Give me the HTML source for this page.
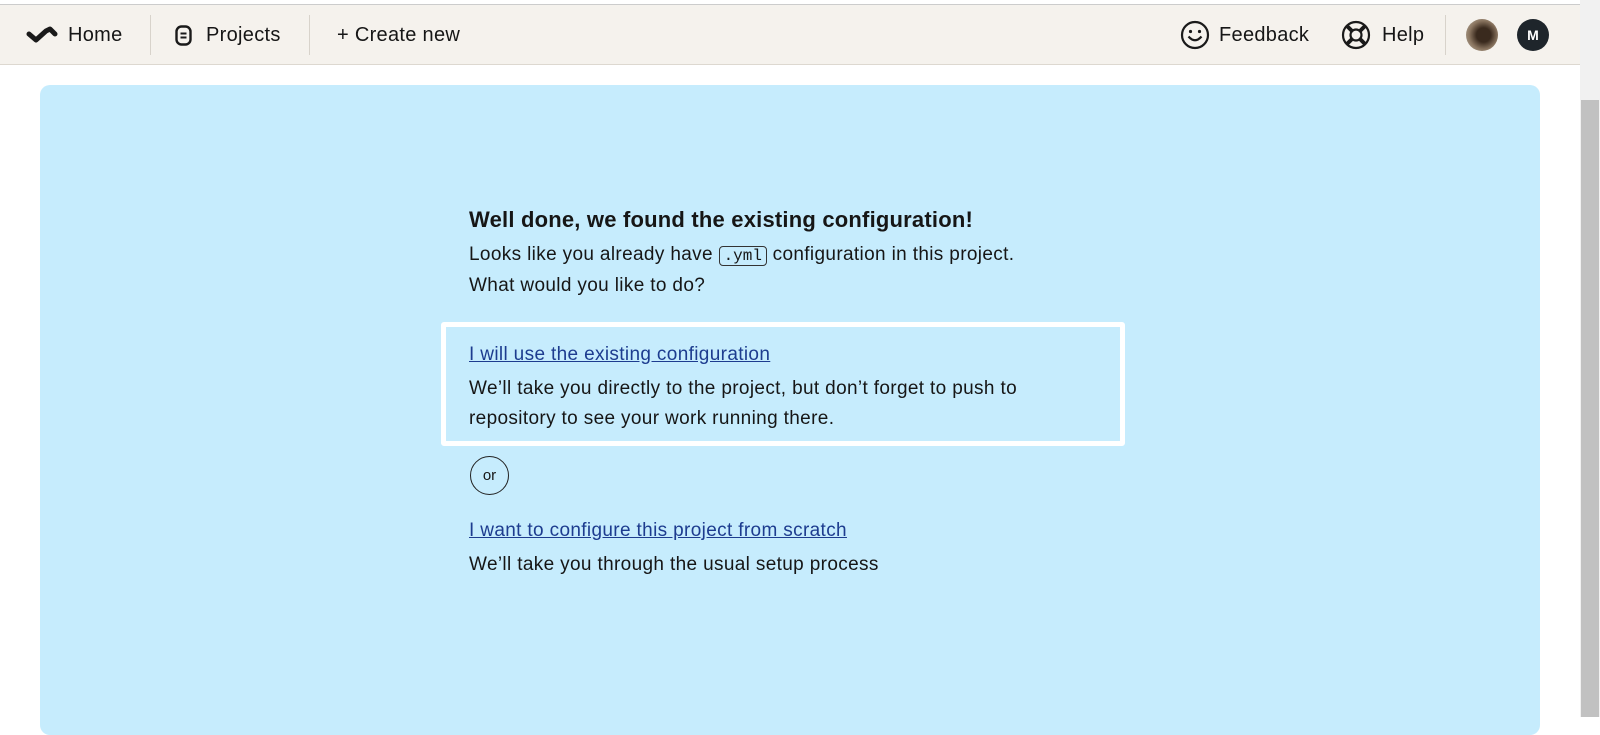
<!DOCTYPE html>
<html><head><meta charset="utf-8"><style>
*{margin:0;padding:0;box-sizing:border-box}
body{width:1600px;height:717px;overflow:hidden;background:#fff;font-family:"Liberation Sans",sans-serif;color:#161616;position:relative}
.top{position:absolute;left:0;top:0;width:1580px;height:5px;background:#fff;border-bottom:1px solid #ccc}
.hdr{position:absolute;left:0;top:5px;width:1580px;height:60px;background:#f5f2ed;border-bottom:1px solid #ddd8d0}
.hdr .t{position:absolute;top:0;line-height:60px;font-size:20px;letter-spacing:0.3px;color:#161616}
.div{position:absolute;top:10px;width:1px;height:40px;background:#d8d3cb}
.sb{position:absolute;left:1580px;top:0;width:20px;height:717px;background:#f1f1f1}
.sb .th{position:absolute;left:1px;top:100px;width:18px;height:617px;background:#c1c1c1}
.panel{position:absolute;left:40px;top:85px;width:1500px;height:650px;background:#c6ecfd;border-radius:10px}
.c{position:absolute;left:469px;font-size:19px;letter-spacing:0.35px;color:#161616}
a{color:#1d3c8f;text-decoration:underline}
code{font-family:"Liberation Mono",monospace;font-size:16px;border:1px solid #333;border-radius:4px;padding:0 4px;letter-spacing:0}
.box{position:absolute;left:441px;top:322px;width:684px;height:124px;border:5px solid #fff;border-radius:3px}
.or{position:absolute;left:470px;top:456px;width:39px;height:39px;border:1px solid #222;border-radius:50%;text-align:center;line-height:37px;font-size:15px}
</style></head><body>
<div class="top"></div>
<div class="hdr">
<svg style="position:absolute;left:25px;top:17px" width="33" height="26" viewBox="0 0 33 26"><path d="M4 12 L11 18 L21 9 L25 7 L30 12" fill="none" stroke="#1a1a1a" stroke-width="5" stroke-linejoin="round" stroke-linecap="round"/></svg>
<div class="t" style="left:68px">Home</div>
<div class="div" style="left:150px"></div>
<svg style="position:absolute;left:175px;top:20px" width="17" height="21" viewBox="0 0 17 21"><rect x="1.5" y="1.5" width="14" height="18" rx="5" fill="none" stroke="#1a1a1a" stroke-width="2.4"/><path d="M5.5 8.5h6M5.5 12.5h6" stroke="#1a1a1a" stroke-width="2"/></svg>
<div class="t" style="left:206px">Projects</div>
<div class="div" style="left:309px"></div>
<div class="t" style="left:337px">+ Create new</div>
<svg style="position:absolute;left:1180px;top:15px" width="30" height="30" viewBox="0 0 30 30"><circle cx="15" cy="15" r="13" fill="none" stroke="#1a1a1a" stroke-width="2.2"/><circle cx="10.5" cy="11.5" r="1.6" fill="#1a1a1a"/><circle cx="19.5" cy="11.5" r="1.6" fill="#1a1a1a"/><path d="M8.5 16.5 Q15 24 21.5 16.5" fill="none" stroke="#1a1a1a" stroke-width="2.2"/></svg>
<div class="t" style="left:1219px">Feedback</div>
<svg style="position:absolute;left:1341px;top:15px" width="30" height="30" viewBox="0 0 30 30"><circle cx="15" cy="15" r="13" fill="none" stroke="#1a1a1a" stroke-width="2.2"/><circle cx="15" cy="15" r="5.5" fill="none" stroke="#1a1a1a" stroke-width="2.2"/><path d="M11 11L6 6M19 11L24 6M11 19L6 24M19 19L24 24" stroke="#1a1a1a" stroke-width="4"/></svg>
<div class="t" style="left:1382px">Help</div>
<div class="div" style="left:1445px"></div>
<div style="position:absolute;left:1466px;top:14px;width:32px;height:32px;border-radius:50%;background:radial-gradient(circle at 55% 50%,#3a2a1e 30%,#8a7560 60%,#c0b8a8)"></div>
<div style="position:absolute;left:1517px;top:14px;width:32px;height:32px;border-radius:50%;background:#1e252b;color:#fff;font-weight:bold;font-size:14px;text-align:center;line-height:32px">M</div>
</div>
<div class="sb"><div class="th"></div></div>
<div class="panel"></div>
<div class="c" style="top:207px;font-size:22px;font-weight:bold;letter-spacing:0.2px">Well done, we found the existing configuration!</div>
<div class="c" style="top:240px;line-height:29px">Looks like you already have <code>.yml</code> configuration in this project.<br>What would you like to do?</div>
<div class="box"></div>
<div class="c" style="top:344px"><a>I will use the existing configuration</a></div>
<div class="c" style="top:374px;line-height:30px">We’ll take you directly to the project, but don’t forget to push to<br>repository to see your work running there.</div>
<div class="or">or</div>
<div class="c" style="top:520px"><a>I want to configure this project from scratch</a></div>
<div class="c" style="top:554px">We’ll take you through the usual setup process</div>
</body></html>
